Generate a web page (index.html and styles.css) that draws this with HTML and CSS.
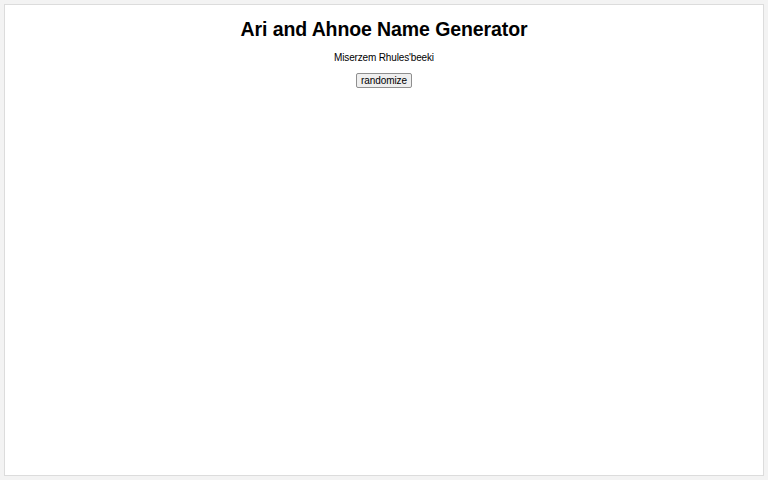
FILE: index.html
```html
<!DOCTYPE html>
<html lang="en">
<head>
<meta charset="utf-8">
<title>Ari and Ahnoe Name Generator</title>
<link rel="stylesheet" href="styles.css">
</head>
<body>
<main class="panel">
  <h1 class="title">Ari and Ahnoe Name Generator</h1>
  <p class="name">Miserzem Rhules'beeki</p>
  <button class="randomize" type="button">randomize</button>
</main>
</body>
</html>
```
FILE: styles.css
```css
html, body {
  margin: 0;
  height: 100%;
}

body {
  background: #f3f3f3;
  font-family: "Liberation Sans", Arial, sans-serif;
  color: #000;
}

.panel {
  box-sizing: border-box;
  margin: 4px;
  height: calc(100% - 8px);
  background: #fff;
  border: 1px solid #dcdcdc;
  display: flex;
  flex-direction: column;
  align-items: center;
  padding-top: 16px;
}

.title {
  margin: 0;
  font-size: 19.5px;
  letter-spacing: -0.1px;
  font-weight: bold;
  line-height: 16px;
}

.name {
  margin: 15px 0 0;
  font-size: 10px;
  letter-spacing: -0.15px;
  line-height: 12px;
}

.randomize {
  margin-top: 9px;
  font-family: "Liberation Sans", Arial, sans-serif;
  font-size: 10px;
  letter-spacing: -0.1px;
  padding: 1px 4px;
  background: #efefef;
  border: 1px solid #8f8f8f;
  border-radius: 2px;
  color: #000;
}
```
